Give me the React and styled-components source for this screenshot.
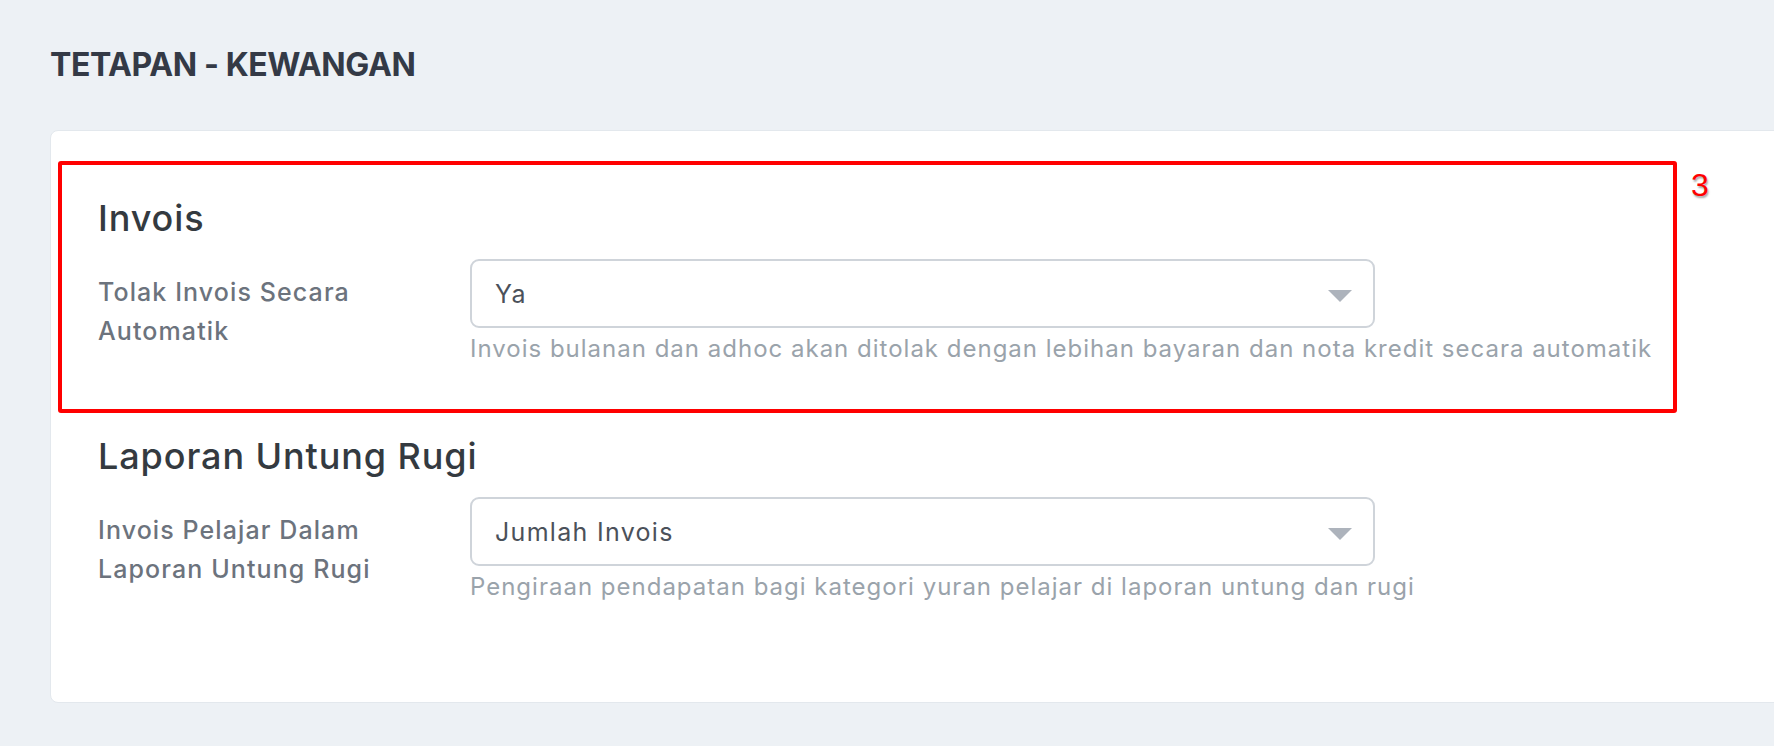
import React from "react";
import styled, { createGlobalStyle } from "styled-components";

const sections = [
  {
    title: "Invois",
    label: ["Tolak Invois Secara", "Automatik"],
    value: "Ya",
    help: "Invois bulanan dan adhoc akan ditolak dengan lebihan bayaran dan nota kredit secara automatik",
    highlight: true,
    mark: "3",
  },
  {
    title: "Laporan Untung Rugi",
    label: ["Invois Pelajar Dalam", "Laporan Untung Rugi"],
    value: "Jumlah Invois",
    help: "Pengiraan pendapatan bagi kategori yuran pelajar di laporan untung dan rugi",
    highlight: false,
  },
];

function App() {
  return (
    <>
      <GlobalStyle />
      <Page>
        <PageTitle>TETAPAN - KEWANGAN</PageTitle>
        <Card>
          {sections.map((section) => (
            <Section $highlight={section.highlight} key={section.title}>
              {section.mark && <Mark>{section.mark}</Mark>}
              <SectionTitle>{section.title}</SectionTitle>
              <Row>
                <Label>
                  {section.label[0]}
                  <br />
                  {section.label[1]}
                </Label>
                <Field>
                  <Select>
                    <span>{section.value}</span>
                    <Caret viewBox="0 0 24 12">
                      <path d="M0 0 H24 L12 12 Z" fill="#adb3bc" />
                    </Caret>
                  </Select>
                  <Help>{section.help}</Help>
                </Field>
              </Row>
            </Section>
          ))}
        </Card>
      </Page>
    </>
  );
}

export default App;

const GlobalStyle = createGlobalStyle`
  html, body {
    margin: 0;
    padding: 0;
    background: #edf1f5;
    overflow: hidden;
  }
  body {
    font-family: Inter, "Noto Sans", sans-serif;
  }
`;

const Page = styled.div`
  width: 1774px;
  height: 746px;
  padding: 45px 0 0 50px;
  box-sizing: border-box;
  overflow: hidden;
`;

const PageTitle = styled.h1`
  margin: 0 0 45px;
  font-size: 32px;
  line-height: 40px;
  font-weight: 700;
  color: #343a46;
  letter-spacing: -0.4px;
`;

const Card = styled.div`
  width: 1760px;
  height: 573px;
  box-sizing: border-box;
  background: #fff;
  border: 1px solid #e3e8ed;
  border-radius: 8px;
  padding: 30px 0 0 7px;
`;

const Section = styled.div`
  position: relative;
  width: 1619px;
  box-sizing: border-box;
  border: ${({ $highlight }) => ($highlight ? "4px solid #ff0000" : "none")};
  border-radius: 3px;
  padding: ${({ $highlight }) => ($highlight ? "31px 0 43px 36px" : "21px 0 0 40px")};
`;

const Mark = styled.span`
  position: absolute;
  top: 4px;
  left: calc(100% + 18px);
  font-family: "Liberation Sans", Arial, sans-serif;
  font-size: 32px;
  line-height: 32px;
  color: #ff0000;
  text-shadow: 1px 2px 2px rgba(0, 0, 0, 0.35);
`;

const SectionTitle = styled.h2`
  margin: 0 0 19px;
  font-size: 36px;
  line-height: 44px;
  font-weight: 500;
  color: #343a40;
  letter-spacing: 0.9px;
`;

const Row = styled.div`
  display: flex;
  align-items: flex-start;
`;

const Label = styled.div`
  width: 372px;
  flex: none;
  margin-top: 14px;
  font-size: 25px;
  line-height: 39px;
  font-weight: 500;
  color: #6c737d;
  letter-spacing: 1.1px;
`;

const Field = styled.div`
  display: flex;
  flex-direction: column;
`;

const Select = styled.div`
  width: 905px;
  height: 69px;
  box-sizing: border-box;
  border: 2px solid #cfd4da;
  border-radius: 9px;
  padding: 0 21px 0 23px;
  display: flex;
  align-items: center;
  justify-content: space-between;
  font-size: 25px;
  color: #4b515a;
  letter-spacing: 1.3px;
`;

const Caret = styled.svg`
  width: 24px;
  height: 12px;
  margin-top: 4px;
`;

const Help = styled.div`
  margin-top: 4px;
  font-size: 24px;
  line-height: 34px;
  color: #9aa3ab;
  letter-spacing: 1px;
`;
